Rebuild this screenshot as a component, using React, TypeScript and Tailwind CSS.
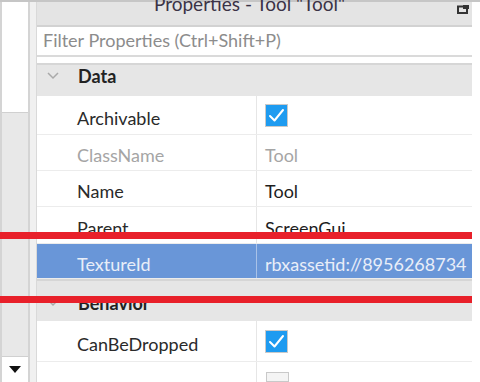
const font = { fontFamily: "Lato, 'Open Sans', sans-serif" };

function Check() {
  return (
    <div className="flex h-[23px] w-[23px] items-center justify-center border border-[#c9c9c9] bg-[#1e9bf0]">
      <svg width="17" height="15" viewBox="0 0 17 15" fill="none">
        <path d="M2 8 L6.5 12.5 L15 2" stroke="white" strokeWidth="2" strokeLinecap="round" strokeLinejoin="round" />
      </svg>
    </div>
  );
}

function Chevron() {
  return (
    <svg width="12" height="8" viewBox="0 0 12 8" fill="none" className="ml-[10px]">
      <path d="M1 1 L6 6 L11 1" stroke="#a9a9a9" strokeWidth="1.5" />
    </svg>
  );
}

function Header({ title, h, align }: { title: string; h: string; align: string }) {
  return (
    <div className={`flex border-t-2 border-[#d6d6d6] bg-[#e6e6e6] ${h} ${align}`}>
      <div className="flex items-center">
        <Chevron />
        <span className="ml-[19px] text-[18px] leading-[18px] font-bold text-[#222]">{title}</span>
      </div>
    </div>
  );
}

function Row({
  label,
  value,
  h = "h-[37px]",
  muted = false,
  selected = false,
}: {
  label: string;
  value?: React.ReactNode;
  h?: string;
  muted?: boolean;
  selected?: boolean;
}) {
  return (
    <div className={`flex ${h} border-b border-[#ececec] ${selected ? "bg-[#6996d8]" : "bg-white"}`}>
      <div
        className={`flex w-[219px] items-center pl-[40px] pt-[6px] text-[18px] leading-[18px] ${
          selected ? "text-[#e9eef8]" : muted ? "text-[#a5a5a5]" : "text-[#2a2a2a]"
        }`}
      >
        {label}
      </div>
      <div
        className={`flex flex-1 items-center border-l ${selected ? "border-[#a9c2e8] text-[#e9eef8]" : "border-[#e6e6e6]"} pl-[8px] text-[18px] leading-[18px] ${
          muted ? "text-[#a5a5a5]" : selected ? "" : "text-[#1e1e1e]"
        } ${typeof value === "string" ? "pt-[6px]" : "pt-[1px]"}`}
      >
        {value}
      </div>
    </div>
  );
}

export default function App() {
  return (
    <div className="relative h-[382px] w-[480px] overflow-hidden bg-white" style={font}>
      <div className="h-[2px] bg-[#c6c6c6]" />
      <div className="flex h-[380px]">
        <div className="flex w-[30px] flex-col border-l-2 border-r-2 border-[#d4d4d4]">
          <div className="h-[110px] bg-white" />
          <div className="h-[245px] border-t border-b border-[#d0d0d0] bg-[#e8e8e8]" />
          <div className="flex flex-1 items-start justify-center pt-[9px]">
            <svg width="12" height="7" viewBox="0 0 12 7">
              <path d="M0 0 H12 L6 7 Z" fill="#111" />
            </svg>
          </div>
        </div>
        <div className="w-[7px] border-r border-[#d9d9d9] bg-[#f0f0f0]" />
        <div className="flex w-[435px] flex-col">
          <div className="relative flex h-[25px] items-start justify-center border-b-2 border-[#d2d2d2] bg-[#e4e4e4]">
            <span className="-mt-[11px] pr-[10px] text-[19px] leading-[26px] text-[#3b3346]">Properties - Tool "Tool"</span>
            <svg className="absolute right-[3px] top-[3px]" width="12" height="9" viewBox="0 0 12 9">
              <rect x="1" y="1.5" width="9" height="6.5" fill="none" stroke="#333" strokeWidth="2" />
              <rect x="6" y="0" width="6" height="4" fill="#333" />
            </svg>
          </div>
          <div className="flex h-[31px] items-center border-b-2 border-[#dadada] bg-white pl-[6px] text-[18px] text-[#8c8c8c]">
            Filter Properties (Ctrl+Shift+P)
          </div>
          <div className="h-[6px] bg-white" />
          <Header title="Data" h="h-[33px]" align="items-start pt-[2px]" />
          <Row label="Archivable" value={<Check />} h="h-[40px]" />
          <Row label="ClassName" value="Tool" muted h="h-[36px]" />
          <Row label="Name" value="Tool" />
          <Row label="Parent" value="ScreenGui" />
          <Row label="TextureId" value="rbxassetid://8956268734" h="h-[36px]" selected />
          <Header title="Behavior" h="h-[42px]" align="items-center pt-[4px]" />
          <Row label="CanBeDropped" value={<Check />} h="h-[42px]" />
          <div className="flex h-[20px] bg-white">
            <div className="w-[219px]" />
            <div className="flex-1 border-l border-[#e6e6e6] pl-[9px] pt-[10px]">
              <div className="h-[10px] w-[23px] border border-[#c9c9c9] bg-[#f4f4f4]" />
            </div>
          </div>
        </div>
      </div>
      <div className="absolute left-0 top-[232px] h-[7px] w-[472px] bg-[#e8202a]" />
      <div className="absolute left-0 top-[296px] h-[7px] w-[472px] bg-[#e8202a]" />
    </div>
  );
}
